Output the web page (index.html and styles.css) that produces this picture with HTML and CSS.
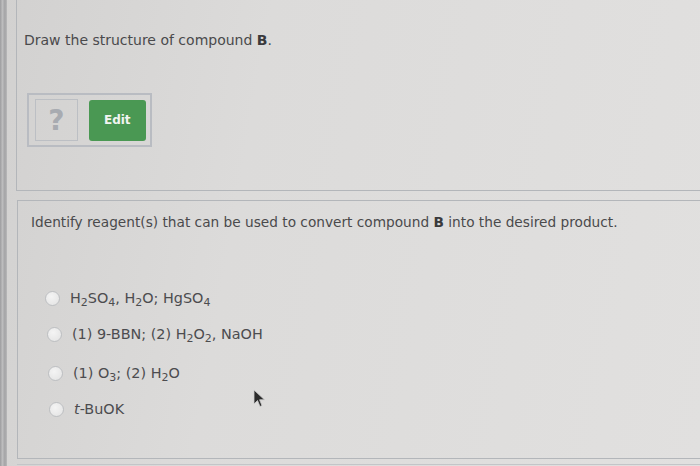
FILE: index.html
```html
<!DOCTYPE html>
<html>
<head>
<meta charset="utf-8">
<link rel="stylesheet" href="styles.css">
</head>
<body>
<div class="screen">
  <div class="edge"></div>
  <div class="main">
    <section class="panel panel-draw">
      <p class="prompt">Draw the structure of compound <b>B</b>.</p>
      <div class="drawbox">
        <div class="preview">?</div>
        <button class="edit">Edit</button>
      </div>
    </section>
    <section class="panel panel-reagent">
      <p class="prompt prompt2">Identify reagent(s) that can be used to convert compound <b>B</b> into the desired product.</p>
      <ul class="options">
        <li class="opt o1"><span class="radio"></span><span>H<sub>2</sub>SO<sub>4</sub>, H<sub>2</sub>O; HgSO<sub>4</sub></span></li>
        <li class="opt o2"><span class="radio"></span><span>(1) 9-BBN; (2) H<sub>2</sub>O<sub>2</sub>, NaOH</span></li>
        <li class="opt o3"><span class="radio"></span><span>(1) O<sub>3</sub>; (2) H<sub>2</sub>O</span></li>
        <li class="opt o4"><span class="radio"></span><span><i>t</i>-BuOK</span></li>
      </ul>
      <svg class="cursor" width="14" height="20" viewBox="0 0 14 20"><path d="M1 1 L1 15 L4.5 11.5 L7 17.5 L9 16.6 L6.6 10.8 L11.5 10.8 Z" fill="#2b2b2b" stroke="#cfcfcf" stroke-width="0.8"/></svg>
    </section>
    <div class="footer-line"></div>
  </div>
</div>
</body>
</html>
```
FILE: styles.css
```css
html, body {
  margin: 0;
  padding: 0;
}
body {
  width: 700px;
  height: 466px;
  overflow: hidden;
  background: #dddcdb;
  font-family: "DejaVu Sans", Verdana, sans-serif;
  color: #4a4a4c;
}
.screen {
  display: flex;
  height: 466px;
  background: linear-gradient(100deg, #d2d1d0 0%, #dcdbda 35%, #e1e0df 100%);
}
.edge {
  width: 7px;
  flex: none;
  background: linear-gradient(90deg, #9c9c9e 0%, #bdbdbe 35%, #a3a3a5 70%, #b9b9ba 100%);
}
.main {
  flex: 1;
  padding-left: 9px;
  display: flex;
  flex-direction: column;
}
.panel {
  position: relative;
  border: 1px solid #b3b6ba;
  border-right: none;
}
.panel-draw {
  border-top: none;
  height: 191px;
  box-sizing: border-box;
}
.prompt {
  margin: 0;
  line-height: 18px;
}
.panel-draw .prompt {
  padding: 31px 0 0 7px;
  font-size: 14px;
}
.prompt b {
  font-weight: bold;
  color: #3a3a3c;
}
.drawbox {
  margin: 44px 0 0 10px;
  border: 2px solid #b9bcc2;
  display: flex;
  align-items: center;
  gap: 11px;
  padding: 0 4px 0 6px;
  box-sizing: border-box;
  width: 125px;
  height: 54px;
}
.preview {
  width: 43px;
  height: 42px;
  box-sizing: border-box;
  border: 1px solid #bcbfc4;
  display: flex;
  align-items: center;
  justify-content: center;
  font-weight: bold;
  font-size: 28px;
  color: #a8abb1;
}
.edit {
  width: 58px;
  height: 41px;
  border: none;
  border-radius: 3px;
  background: #4a9853;
  color: #f1f4f1;
  font-family: "DejaVu Sans", Verdana, sans-serif;
  font-weight: bold;
  font-size: 12px;
  padding: 0;
}
.panel-reagent {
  margin-top: 9px;
  margin-left: 1px;
  height: 259px;
  box-sizing: border-box;
}
.prompt2 {
  padding: 12px 0 0 13px;
  font-size: 13.7px;
}
.options {
  list-style: none;
  margin: 0;
  padding: 56px 0 0 27px;
  display: flex;
  flex-direction: column;
  gap: 14px;
}
.opt {
  display: flex;
  align-items: center;
  gap: 10px;
  height: 22px;
  font-size: 14.4px;
  color: #4c4c4f;
}
.o2 { margin-left: 2px; }
.o3 { margin-left: 3px; margin-top: 3px; }
.o4 { margin-left: 4px; }
.radio {
  width: 13px;
  height: 13px;
  border-radius: 50%;
  border: 1px solid #bdbfc2;
  background: radial-gradient(circle at 40% 35%, #f4f4f4, #e2e2e2);
  flex: none;
}
sub {
  font-size: 11px;
  vertical-align: -3px;
  line-height: 0;
}
.cursor {
  position: absolute;
  left: 235px;
  top: 188px;
}
.footer-line {
  height: 5px;
  margin-left: 1px;
  border-bottom: 1px solid #c3c5c8;
}
```
